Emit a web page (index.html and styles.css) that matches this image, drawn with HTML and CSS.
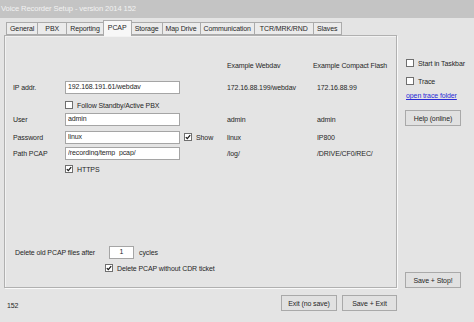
FILE: index.html
```html
<!DOCTYPE html>
<html lang="en">
<head>
  <meta charset="UTF-8" />
  <title>Voice Recorder Setup</title>
  <link rel="stylesheet" href="styles.css">
</head>
<body>

  <div class="titlebar">Voice Recorder Setup - version 2014 152</div>

  <div class="main">
    <!-- Tabs + page -->
    <div class="tabbox">
      <ul class="tabs">
        <li>General</li>
        <li>PBX</li>
        <li>Reporting</li>
        <li class="active">PCAP</li>
        <li>Storage</li>
        <li>Map Drive</li>
        <li>Communication</li>
        <li class="wide">TCR/MRK/RND</li>
        <li>Slaves</li>
      </ul>

      <div class="panel">
        <div class="row head">
          <span></span><span></span><span></span>
          <span>Example Webdav</span>
          <span class="cf-head">Example Compact Flash</span>
        </div>
        <div class="row ip">
          <label>IP addr.</label>
          <input type="text" value="192.168.191.61/webdav" />
          <span></span>
          <span>172.16.88.199/webdav</span>
          <span>172.16.88.99</span>
        </div>
        <div class="row short follow">
          <span></span>
          <span class="check"><span class="box"></span>Follow Standby/Active PBX</span>
        </div>
        <div class="row short">
          <label>User</label>
          <input type="text" value="admin" />
          <span></span>
          <span>admin</span>
          <span>admin</span>
        </div>
        <div class="row pass">
          <label>Password</label>
          <input type="text" value="linux" />
          <span class="check show"><span class="box"><svg viewBox="0 0 6 6"><path d="M0.8 3.1 L2.3 4.6 L5.2 1.2" /></svg></span>Show</span>
          <span>linux</span>
          <span>IP800</span>
        </div>
        <div class="row">
          <label>Path PCAP</label>
          <input type="text" value="/recording/temp_pcap/" />
          <span></span>
          <span>/log/</span>
          <span>/DRIVE/CF0/REC/</span>
        </div>
        <div class="row">
          <span></span>
          <span class="check"><span class="box"><svg viewBox="0 0 6 6"><path d="M0.8 3.1 L2.3 4.6 L5.2 1.2" /></svg></span>HTTPS</span>
        </div>

        <div class="cleanup">
          <div class="cleanup-row">
            <label>Delete old PCAP files after</label>
            <input type="text" class="cycles" value="1" />
            <span>cycles</span>
          </div>
          <div class="check no-cdr"><span class="box"><svg viewBox="0 0 6 6"><path d="M0.8 3.1 L2.3 4.6 L5.2 1.2" /></svg></span>Delete PCAP without CDR ticket</div>
        </div>
      </div>
    </div>

    <!-- Right column -->
    <div class="side">
      <div class="check side-row"><span class="box"></span>Start in Taskbar</div>
      <div class="check side-row trace"><span class="box"></span>Trace</div>
      <a href="#" class="link">open trace folder</a>
      <button class="btn help">Help (online)</button>
      <button class="btn stop">Save + Stop!</button>
    </div>
  </div>

  <div class="footer">
    <span class="build">152</span>
    <button class="btn">Exit (no save)</button>
    <button class="btn">Save + Exit</button>
  </div>

</body>
</html>
```

FILE: styles.css
```css
body {
  margin: 0;
  width: 474px;
  height: 322px;
  overflow: hidden;
  background: #e4e4e4;
  font-family: "Liberation Sans", Arial, sans-serif;
  font-size: 7px;
  letter-spacing: -0.1px;
  color: #262626;
}

.titlebar {
  height: 18px;
  line-height: 18px;
  background: #c4c4c4;
  color: #f2f2f2;
  font-size: 7.6px;
  padding-left: 1px;
  white-space: nowrap;
}

.main {
  display: flex;
  height: 270px;
  padding-left: 4px;
}

/* tabs */
.tabbox {
  width: 393px;
  display: flex;
  flex-direction: column;
}

.tabs {
  list-style: none;
  margin: 4px 0 0 2px;
  padding: 0;
  display: flex;
  height: 13px;
}

.tabs li {
  box-sizing: border-box;
  min-width: 29px;
  height: 13px;
  padding: 0 3px;
  line-height: 12px;
  text-align: center;
  white-space: nowrap;
  background: #ebebeb;
  border: 1px solid #ababab;
  border-right: none;
}

.tabs li:last-child {
  border-right: 1px solid #ababab;
}

.tabs li.wide {
  padding: 0 5px;
}

.tabs li.active {
  position: relative;
  z-index: 1;
  height: 16px;
  margin-top: -2px;
  line-height: 14px;
  background: #f7f7f7;
  border-bottom: none;
  border-right: 1px solid #ababab;
}

.tabs li.active + li {
  border-left: none;
}

.panel {
  flex: 1;
  display: flex;
  flex-direction: column;
  border: 1px solid #b0b0b0;
  box-shadow: 1px 1px 0 #f9f9f9, inset 1px 1px 0 #f2f2f2;
  padding-left: 8px;
}

.row {
  display: grid;
  grid-template-columns: 52px 115px 47px 90px 1fr;
  align-items: center;
  height: 16px;
  white-space: nowrap;
}

.row.short {
  height: 14px;
}

.head {
  margin-top: 21px;
}

.ip {
  margin-top: 6px;
}

.follow {
  margin-top: 3px;
}

.pass {
  margin-top: 3px;
}

.cf-head {
  margin-left: -4px;
}

input {
  box-sizing: border-box;
  height: 13px;
  margin: 0;
  padding: 0 2px 2px;
  line-height: 9px;
  border: 1px solid #a5a5a5;
  background: #fff;
  font-family: inherit;
  font-size: 7px;
  letter-spacing: -0.1px;
  color: #262626;
  outline: none;
}

/* checkboxes */
.check {
  display: flex;
  align-items: center;
  gap: 4px;
  white-space: nowrap;
}

.check.show {
  padding-left: 4px;
}

.box {
  box-sizing: border-box;
  width: 8px;
  height: 8px;
  flex: none;
  border: 1px solid #6f6f6f;
  background: #fff;
  display: flex;
}

.box svg {
  width: 6px;
  height: 6px;
}

.box path {
  fill: none;
  stroke: #1a1a1a;
  stroke-width: 1.3;
}

/* bottom of page */
.cleanup {
  margin-top: auto;
  padding: 0 0 12px 2px;
}

.cleanup-row {
  display: grid;
  grid-template-columns: 89px 25px auto;
  column-gap: 5px;
  align-items: center;
  height: 16px;
  white-space: nowrap;
}

.cycles {
  text-align: center;
}

.no-cdr {
  height: 14px;
  margin: 1px 0 0 90px;
}

/* right column */
.side {
  width: 56px;
  margin-left: 8px;
  display: flex;
  flex-direction: column;
}

.side-row {
  height: 14px;
  margin-left: 1px;
}

.side-row:first-child {
  margin-top: 38px;
}

.trace {
  margin-top: 4px;
}

.link {
  height: 12px;
  line-height: 12px;
  margin: 2px 0 0 1px;
  color: #2b2bd6;
  white-space: nowrap;
}

.btn {
  box-sizing: border-box;
  height: 16px;
  width: 56px;
  margin: 0;
  padding: 0;
  background: #e1e1e1;
  border: 1px solid #a9a9a9;
  font-family: inherit;
  font-size: 7px;
  letter-spacing: -0.1px;
  color: #262626;
  white-space: nowrap;
}

.help {
  margin-top: 8px;
}

.stop {
  margin-top: auto;
}

.footer {
  display: flex;
  align-items: flex-start;
  gap: 5px;
  height: 34px;
  padding: 7px 77px 0 7px;
  box-sizing: border-box;
}

.build {
  margin-top: 3px;
  line-height: 16px;
  margin-right: auto;
}

.footer .btn:last-child {
  width: 55px;
}
```
